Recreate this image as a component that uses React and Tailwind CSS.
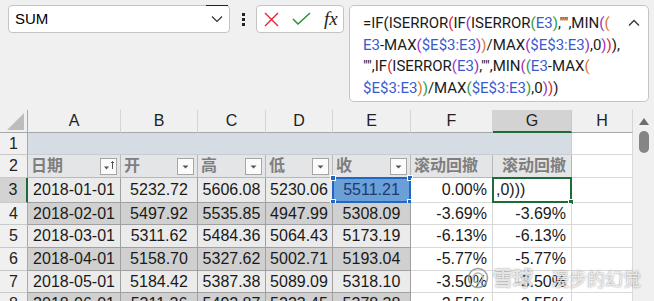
const FONT = "font-['Liberation_Sans','Noto_Sans_CJK_SC',sans-serif]";

const BLACK = "text-[#1a1a1a]";
const BLUE = "text-[#3a5bd0]";
const RED = "text-[#d8262e]";
const PURPLE = "text-[#9b2fc0]";
const GREEN = "text-[#2d9a45]";
const ORANGE = "text-[#d8762e]";

const formula = [
  [["=IF(", BLACK], ["ISERROR", BLACK], ["(", RED], ["IF", BLACK], ["(", PURPLE], ["ISERROR", BLACK], ["(", GREEN], ["E3", BLUE], [")", GREEN], [",\"\",MIN", BLACK], ["(", PURPLE], ["(", ORANGE]],
  [["E3", BLUE], ["-MAX", BLACK], ["(", PURPLE], ["$E$3:E3", BLUE], [")", PURPLE], [")", ORANGE], ["/MAX", BLACK], ["(", PURPLE], ["$E$3:E3", BLUE], [")", PURPLE], [",0", BLACK], [")", PURPLE], [")", RED], [")", BLACK], [",", BLACK]],
  [["\"\",IF", BLACK], ["(", RED], ["ISERROR", BLACK], ["(", PURPLE], ["E3", BLUE], [")", PURPLE], [",\"\",MIN", BLACK], ["(", PURPLE], ["(", GREEN], ["E3", BLUE], ["-MAX", BLACK], ["(", ORANGE]],
  [["$E$3:E3", BLUE], [")", ORANGE], [")", GREEN], ["/MAX", BLACK], ["(", GREEN], ["$E$3:E3", BLUE], [")", GREEN], [",0", BLACK], [")", PURPLE], [")", RED], [")", BLACK]],
];

const cols = [
  { w: "w-[93px]", l: "A", head: "日期", sort: true },
  { w: "w-[77px]", l: "B", head: "开" },
  { w: "w-[68px]", l: "C", head: "高" },
  { w: "w-[67px]", l: "D", head: "低" },
  { w: "w-[78px]", l: "E", head: "收" },
  { w: "w-[82px]", l: "F", head: "滚动回撤" },
  { w: "w-[79px]", l: "G", head: "滚动回撤" },
  { w: "w-[61px]", l: "H" },
];

const rows = [
  { n: 3, h: "h-[25px]", band: "bg-[#ebebeb]", v: ["2018-01-01", "5232.72", "5606.08", "5230.06", "5511.21", "0.00%", ",0)))"] },
  { n: 4, h: "h-[22px]", band: "bg-[#d0d0d0]", v: ["2018-02-01", "5497.92", "5535.85", "4947.99", "5308.09", "-3.69%", "-3.69%"] },
  { n: 5, h: "h-[23px]", band: "bg-[#ebebeb]", v: ["2018-03-01", "5311.62", "5484.36", "5064.43", "5173.19", "-6.13%", "-6.13%"] },
  { n: 6, h: "h-[23px]", band: "bg-[#d0d0d0]", v: ["2018-04-01", "5158.70", "5327.62", "5002.71", "5193.04", "-5.77%", "-5.77%"] },
  { n: 7, h: "h-[22px]", band: "bg-[#ebebeb]", v: ["2018-05-01", "5184.42", "5387.38", "5089.09", "5318.10", "-3.50%", "-3.50%"] },
  { n: 8, h: "h-[22px]", band: "bg-[#d0d0d0]", v: ["2018-06-01", "5311.36", "5492.87", "5223.45", "5378.38", "-2.55%", "-2.55%"] },
];

function FilterBtn({ sort }) {
  return (
    <div className="w-[17px] h-[17px] bg-[#fbfbfb] border border-[#a6a6a6] flex-shrink-0">
      <svg width="15" height="15" viewBox="0 0 15 15">
        {sort ? (
          <>
            <path d="M3 7.5h5l-2.5 3z" fill="#555" />
            <path d="M11.5 10V2.5M10 4l1.5-1.5L13 4" stroke="#555" strokeWidth="1" fill="none" />
          </>
        ) : (
          <path d="M4.5 6.5h6l-3 3z" fill="#555" />
        )}
      </svg>
    </div>
  );
}

function Handle({ pos }) {
  return <div className={`absolute w-[6px] h-[6px] bg-[#2168c4] border border-white ${pos}`} />;
}

function DataCell({ col, i, row }) {
  const text = row.v[i];
  if (i < 5) {
    const sel = row.n === 3 && i === 4;
    return (
      <div
        className={`${col.w} h-full flex items-center justify-center border-r border-b border-[#a0a0a0] relative ${sel ? "bg-[#6b9fd8] text-[#1c3a6e]" : `${row.band} text-[#1a1a1a]`}`}
      >
        {text}
        {sel && (
          <>
            <div className="absolute inset-[-1px] border-2 border-[#2168c4]" />
            <Handle pos="-left-[3px] -top-[3px]" />
            <Handle pos="-right-[3px] -top-[3px]" />
            <Handle pos="-left-[3px] -bottom-[3px]" />
            <Handle pos="-right-[3px] -bottom-[3px]" />
          </>
        )}
      </div>
    );
  }
  if (i === 7) {
    return <div className={`${col.w} h-full bg-white border-r border-b border-[#d9d9d9]`} />;
  }
  const active = row.n === 3 && i === 6;
  return (
    <div
      className={`${col.w} h-full bg-white flex items-center border-r border-b border-[#d9d9d9] text-[#1a1a1a] relative ${active ? "justify-start pl-[3px]" : "justify-end pr-[5px]"}`}
    >
      {text}
      {active && (
        <>
          <div className="absolute inset-[-1px] border-2 border-[#1e6b3a]" />
          <div className="absolute -right-[3px] -bottom-[3px] w-[6px] h-[6px] bg-[#1e6b3a] border border-white" />
        </>
      )}
    </div>
  );
}

export default function App() {
  return (
    <div className={`w-[654px] h-[301px] bg-[#f0f0f0] overflow-hidden relative ${FONT}`}>
      {/* formula bar */}
      <div className="flex items-start pt-[5px] pl-[8px]">
        <div className="w-[222px] h-[28px] bg-white border border-[#c4c4c4] rounded-[4px] flex items-center relative">
          <span className="pl-[6px] text-[15px] text-black">SUM</span>
          <div className="absolute right-[1px] -top-[1px] w-[22px] border-t border-[#222]" />
          <svg className="absolute right-[6px] top-[9px]" width="12" height="8" viewBox="0 0 12 8">
            <path d="M1 1.5l5 5 5-5" stroke="#333" strokeWidth="1.2" fill="none" />
          </svg>
        </div>
        <div className="w-[26px] h-[28px] flex flex-col items-center justify-center gap-[2px]">
          <div className="w-[3px] h-[3px] bg-[#222]" />
          <div className="w-[3px] h-[3px] bg-[#222]" />
          <div className="w-[3px] h-[3px] bg-[#222]" />
        </div>
        <div className="w-[88px] h-[28px] bg-white border border-[#c4c4c4] rounded-[4px] flex items-center pl-[7px] gap-[13px]">
          <svg width="15" height="15" viewBox="0 0 15 15">
            <path d="M1 1l13 13M14 1L1 14" stroke="#e2262c" strokeWidth="1.4" />
          </svg>
          <svg width="19" height="14" viewBox="0 0 19 14">
            <path d="M1 7l5 5L18 1" stroke="#2a8f3a" strokeWidth="1.5" fill="none" />
          </svg>
          <span className="font-['Liberation_Serif',serif] italic text-[19px] leading-none text-[#222] -mt-[2px]">fx</span>
        </div>
        <div className="ml-[5px] w-[300px] h-[97px] bg-white border border-[#c4c4c4] rounded-[5px] relative pl-[13px] pt-[7px] text-[15px] leading-[21.5px] font-['Roboto',sans-serif]">
          {formula.map((line, li) => (
            <div key={li} className="whitespace-pre">
              {line.map(([t, c], k) => (
                <span key={k} className={c}>{t}</span>
              ))}
            </div>
          ))}
          <svg className="absolute right-[8px] top-[13px]" width="12" height="8" viewBox="0 0 12 8">
            <path d="M1 6.5l5-5 5 5" stroke="#333" strokeWidth="1.3" fill="none" />
          </svg>
        </div>
      </div>

      {/* grid */}
      <div className="mt-[8px] flex text-[16px]">
        <div className="flex flex-col">
          {/* column headers */}
          <div className="flex h-[23px]">
            <div className="w-[28px] h-full border-r border-b border-[#a8a8a8] bg-[#f0f0f0] flex items-end justify-end pr-[3px] pb-[2px]">
              <svg width="17" height="17" viewBox="0 0 17 17">
                <path d="M17 0V17H0z" fill="#bdbdbd" />
              </svg>
            </div>
            {cols.map((c) => (
              <div
                key={c.l}
                className={`${c.w} h-full flex items-center justify-center border-r text-[#222] ${c.l === "G" ? "bg-[#d3d3d3] border-b-2 border-b-[#1e6b3a] border-r-[#c8c8c8]" : "bg-[#f0f0f0] border-b border-b-[#a8a8a8] border-r-[#d4d4d4]"}`}
              >
                {c.l}
              </div>
            ))}
          </div>

          {/* row 1 */}
          <div className="flex h-[22px]">
            <div className="w-[28px] h-full bg-[#f0f0f0] border-r border-b border-[#c8c8c8] border-r-[#a8a8a8] flex items-center justify-center text-[#222]">1</div>
            <div className="w-[544px] h-full bg-[#d6dce4] border-r border-b border-[#c9ccd2]" />
            <div className="w-[61px] h-full bg-white border-r border-b border-[#d9d9d9]" />
          </div>

          {/* row 2 */}
          <div className="flex h-[23px]">
            <div className="w-[28px] h-full bg-[#f0f0f0] border-r border-b border-[#c8c8c8] border-r-[#a8a8a8] flex items-center justify-center text-[#222]">2</div>
            {cols.map((c, i) =>
              i < 7 ? (
                <div
                  key={c.l}
                  className={`${c.w} h-full bg-[#e4e5e7] border-r border-b border-[#b8b8b8] flex items-center font-bold text-[#7f7f7f] ${i === 6 ? "justify-end pr-[5px]" : "justify-between pl-[3px] pr-[3px]"}`}
                >
                  <span>{c.head}</span>
                  {i < 5 && <FilterBtn sort={c.sort} />}
                </div>
              ) : (
                <div key={c.l} className={`${c.w} h-full bg-white border-r border-b border-[#d9d9d9]`} />
              )
            )}
          </div>

          {/* data rows */}
          {rows.map((r) => (
            <div key={r.n} className={`flex ${r.h}`}>
              <div
                className={`w-[28px] h-full border-b border-[#c8c8c8] flex items-center justify-center text-[#222] ${r.n === 3 ? "bg-[#d3d3d3] border-r-2 border-r-[#1e6b3a]" : "bg-[#f0f0f0] border-r border-r-[#a8a8a8]"}`}
              >
                {r.n}
              </div>
              {cols.map((c, i) => (
                <DataCell key={c.l} col={c} i={i} row={r} />
              ))}
            </div>
          ))}
        </div>

        {/* scrollbar */}
        <div className="flex-1 flex flex-col items-center pt-[7px]">
          <svg width="12" height="9" viewBox="0 0 12 9">
            <path d="M6 1l5 7H1z" fill="#6e6e6e" />
          </svg>
          <div className="mt-[5px] w-[10px] h-[22px] rounded-full bg-[#858585]" />
        </div>
      </div>

      {/* watermark */}
      <div className="absolute left-[467px] top-[267px] flex items-center gap-[4px] text-white/75 [text-shadow:0_0_2px_rgba(0,0,0,0.5)] font-['Noto_Sans_CJK_SC',sans-serif]">
        <svg width="22" height="22" viewBox="0 0 22 22">
          <circle cx="11" cy="11" r="9.5" fill="none" stroke="#a0a0a0" strokeWidth="1.6" />
          <circle cx="11" cy="11" r="5" fill="none" stroke="#b4b4b4" strokeWidth="1.4" />
        </svg>
        <span className="text-[20px] font-bold leading-none">雪球</span>
        <span className="ml-[14px] text-[18px] leading-none">漫步的幻觉</span>
      </div>
    </div>
  );
}
